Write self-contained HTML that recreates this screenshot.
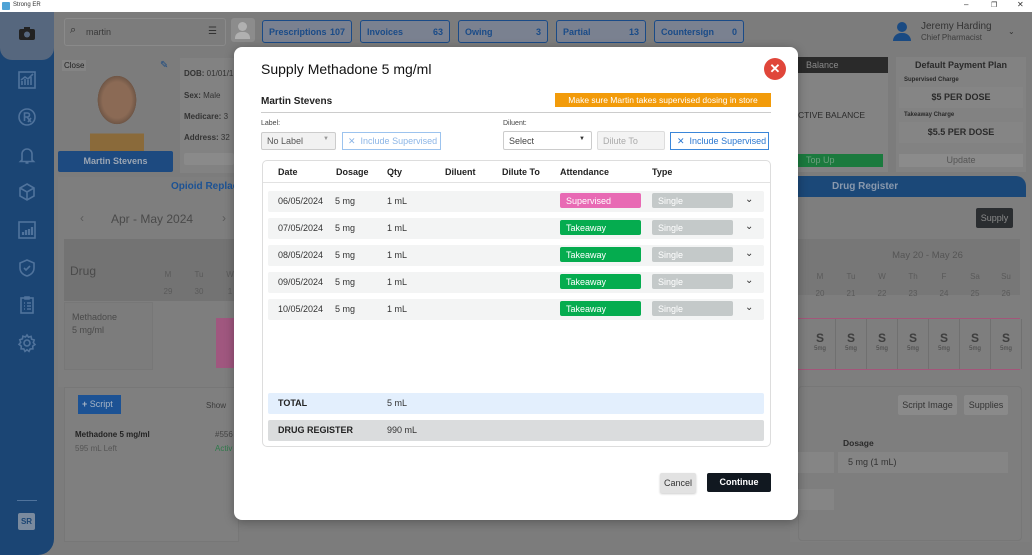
<!DOCTYPE html>
<html><head><meta charset="utf-8"><style>
*{box-sizing:border-box;margin:0;padding:0}
body{width:1032px;height:555px;overflow:hidden;background:#7c7c7c;font-family:"Liberation Sans",sans-serif;position:relative;color:#222}
.a{position:absolute}
.tab{position:absolute;top:20px;height:23px;border:1.5px solid #1a4b88;border-radius:3px;background:#7a8190;color:#1a4b88;font-size:9px;font-weight:bold;display:flex;justify-content:space-between;align-items:center;padding:0 6px}
.ic{position:absolute;left:17px;width:20px;height:20px;fill:none;stroke:#50739c;stroke-width:1.6}
.row{position:absolute;left:268px;width:496px;height:21px;background:#f3f4f4;border-radius:2px;font-size:9px;color:#333}
.row span{position:absolute;top:5px}
.pill{position:absolute;top:2px;height:15px;border-radius:2px;color:#fff;font-size:9px;padding:3px 0 0 6px}
.cal{position:absolute;font-size:8px;color:#5a5a5a;text-align:center}
</style></head><body>
<div class="a" style="left:0;top:0;width:1032px;height:12px;background:#fff;font-size:6px;color:#333">
<div class="a" style="left:2px;top:2px;width:8px;height:8px;background:#4fa3d6;border-radius:1px"></div>
<div class="a" style="left:13px;top:2px">Strong ER</div>
<div class="a" style="left:964px;top:0;font-size:8px">–</div>
<div class="a" style="left:991px;top:1px;font-size:7px">❐</div>
<div class="a" style="left:1017px;top:0;font-size:8px">✕</div>
</div>
<div class="a" style="left:0;top:12px;width:54px;height:543px;background:#1b4574;border-radius:0 0 16px 0"></div>
<div class="a" style="left:0;top:12px;width:54px;height:48px;background:#56677e;border-radius:0 0 12px 12px"></div>
<svg class="a" style="left:19px;top:27px" width="16" height="13"><rect x="0" y="2" width="16" height="11" rx="2" fill="#222"/><rect x="5" y="0" width="6" height="3" fill="#222"/><circle cx="8" cy="7.5" r="3" fill="#56677e"/></svg>
<svg class="ic" style="top:70px" viewBox="0 0 20 20"><rect x="2" y="2" width="16" height="16"/><path d="M5 15v-4M8 15v-6M11 15v-5M14 15v-8M4 10l4-3 3 2 5-5"/></svg>
<svg class="ic" style="top:107px" viewBox="0 0 20 20"><circle cx="10" cy="10" r="8"/><path d="M7.5 14V6h3a2 2 0 0 1 0 4h-3M10 10l4 5M14 11l-3 4"/></svg>
<svg class="ic" style="top:145px" viewBox="0 0 20 20"><path d="M5 15V9a5 5 0 0 1 10 0v6l1.5 1.5h-13zM8.5 18h3"/></svg>
<svg class="ic" style="top:182px" viewBox="0 0 20 20"><path d="M10 2l7 4v8l-7 4-7-4V6zM3 6l7 4 7-4M10 10v8"/></svg>
<svg class="ic" style="top:220px" viewBox="0 0 20 20"><rect x="2" y="2" width="16" height="16"/><path d="M6 15v-3M9 15v-5M12 15v-6M15 15v-8" stroke-width="2.2"/></svg>
<svg class="ic" style="top:258px" viewBox="0 0 20 20"><path d="M10 2l7 3v5c0 4-3 7-7 8-4-1-7-4-7-8V5zM7 10l2 2 4-4"/></svg>
<svg class="ic" style="top:295px" viewBox="0 0 20 20"><rect x="4" y="3" width="12" height="15"/><path d="M8 2h4v2H8zM7 8h1M10 8h4M7 11h1M10 11h4M7 14h1M10 14h4"/></svg>
<svg class="ic" style="top:333px" viewBox="0 0 20 20"><circle cx="10" cy="10" r="3"/><path d="M10 2l1.5 2.2 2.6-.8.5 2.7 2.6.9-.9 2.6 1.7 2-2.3 1.5.2 2.7-2.7.1-1.2 2.5-2-1.6-2 1.6-1.2-2.5-2.7-.1.2-2.7L2 11.4l1.7-2-.9-2.6 2.6-.9.5-2.7 2.6.8z"/></svg>
<div class="a" style="left:17px;top:500px;width:20px;height:1px;background:#50739c"></div>
<div class="a" style="left:18px;top:513px;width:17px;height:17px;background:#7a8a9e;border-radius:2px;color:#1b4574;font-size:8px;font-weight:bold;text-align:center;line-height:17px">SR</div>
<div class="a" style="left:64px;top:18px;width:162px;height:28px;border:1px solid #8a8a8a;border-radius:3px;background:#7c7c7c"></div>
<div class="a" style="left:70px;top:24px;font-size:11px;color:#2e2e2e">⌕</div>
<div class="a" style="left:86px;top:27px;font-size:9px;color:#3a3a3a">martin</div>
<div class="a" style="left:208px;top:26px;font-size:10px;color:#333">☰</div>
<div class="a" style="left:231px;top:18px;width:24px;height:24px;background:#8c8c8c;border-radius:3px"></div>
<div class="a" style="left:238px;top:22px;width:9px;height:9px;border-radius:50%;background:#b0b0b0"></div>
<div class="a" style="left:235px;top:32px;width:15px;height:7px;border-radius:6px 6px 0 0;background:#b0b0b0"></div>
<div class="tab" style="left:262px;width:90px"><span>Prescriptions</span><span>107</span></div>
<div class="tab" style="left:360px;width:90px"><span>Invoices</span><span>63</span></div>
<div class="tab" style="left:458px;width:90px"><span>Owing</span><span>3</span></div>
<div class="tab" style="left:556px;width:90px"><span>Partial</span><span>13</span></div>
<div class="tab" style="left:654px;width:90px"><span>Countersign</span><span>0</span></div>
<div class="a" style="left:897px;top:22px;width:10px;height:10px;border-radius:50%;background:#1a4a82"></div>
<div class="a" style="left:893px;top:33px;width:18px;height:8px;border-radius:8px 8px 0 0;background:#1a4a82"></div>
<div class="a" style="left:921px;top:21px;font-size:10px;color:#333">Jeremy Harding</div>
<div class="a" style="left:921px;top:33px;font-size:8px;color:#3c3c3c">Chief Pharmacist</div>
<div class="a" style="left:1008px;top:27px;font-size:8px;color:#333">⌄</div>
<div class="a" style="left:58px;top:58px;width:118px;height:115px;background:#7c7c7c"></div>
<div class="a" style="left:62px;top:60px;font-size:8px;color:#222;background:#848484;padding:1px 2px">Close</div>
<div class="a" style="left:90px;top:60px;width:54px;height:92px;background:radial-gradient(ellipse 24px 30px at 27px 40px,#8b6a55 60%,#6f5646 80%,transparent 81%),linear-gradient(#7c7c7c 80%,#8a6a3a 80%)"></div>
<div class="a" style="left:160px;top:60px;font-size:10px;color:#1a4a82">✎</div>
<div class="a" style="left:58px;top:151px;width:115px;height:21px;background:#1d4a80;border-radius:2px;color:#9aa5b3;font-size:9px;font-weight:bold;text-align:center;line-height:21px">Martin Stevens</div>
<div class="a" style="left:180px;top:58px;width:56px;height:115px;background:#828282"></div>
<div class="a" style="left:184px;top:69px;font-size:8px;color:#333"><b>DOB:</b> 01/01/1</div>
<div class="a" style="left:184px;top:91px;font-size:8px;color:#333"><b>Sex:</b> Male</div>
<div class="a" style="left:184px;top:112px;font-size:8px;color:#333"><b>Medicare:</b> 3</div>
<div class="a" style="left:184px;top:133px;font-size:8px;color:#333"><b>Address:</b> 32</div>
<div class="a" style="left:184px;top:153px;width:50px;height:12px;background:#8a8a8a;border-radius:2px"></div>
<div class="a" style="left:58px;top:177px;width:180px;height:210px;background:#7e7e7e"></div>
<div class="a" style="left:171px;top:181px;font-size:10px;font-weight:bold;color:#1c5294">Opioid Replac</div>
<div class="a" style="left:80px;top:211px;font-size:12px;color:#5a5a5a">‹</div>
<div class="a" style="left:111px;top:212px;font-size:12px;color:#4a4a4a">Apr - May 2024</div>
<div class="a" style="left:222px;top:211px;font-size:12px;color:#5a5a5a">›</div>
<div class="a" style="left:64px;top:239px;width:170px;height:62px;background:#737373"></div>
<div class="a" style="left:70px;top:264px;font-size:12px;color:#4a4a4a">Drug</div>
<div class="a" style="left:64px;top:302px;width:89px;height:68px;background:#7c7c7c;border:1px solid #777"></div>
<div class="a" style="left:72px;top:311px;font-size:9px;color:#4a4a4a;line-height:13px">Methadone<br>5 mg/ml</div>
<div class="cal" style="left:153px;top:270px;width:30px">M</div><div class="cal" style="left:184px;top:270px;width:30px">Tu</div><div class="cal" style="left:215px;top:270px;width:30px">W</div>
<div class="cal" style="left:153px;top:287px;width:30px">29</div><div class="cal" style="left:184px;top:287px;width:30px">30</div><div class="cal" style="left:215px;top:287px;width:30px">1</div>
<div class="a" style="left:216px;top:318px;width:20px;height:50px;background:#a0577f"></div>
<div class="a" style="left:64px;top:387px;width:175px;height:155px;background:#7f7f7f;border:1px solid #777"></div>
<div class="a" style="left:78px;top:395px;width:43px;height:19px;background:#1c5294;color:#a8b5c5;font-size:9px;padding:4px 0 0 4px"><b>+</b> Script</div>
<div class="a" style="left:206px;top:401px;font-size:8px;color:#3a3a3a">Show</div>
<div class="a" style="left:75px;top:430px;font-size:8px;font-weight:bold;color:#222">Methadone 5 mg/ml</div>
<div class="a" style="left:75px;top:444px;font-size:8px;color:#555">595 mL Left</div>
<div class="a" style="left:215px;top:430px;font-size:8px;color:#444">#556</div>
<div class="a" style="left:215px;top:444px;font-size:8px;color:#2e7a4a">Activ</div>
<div class="a" style="left:798px;top:57px;width:90px;height:115px;background:#838383"></div>
<div class="a" style="left:798px;top:57px;width:90px;height:16px;background:#2a2a2a;color:#8a8a8a;font-size:9px;padding:3px 0 0 8px">Balance</div>
<div class="a" style="left:798px;top:110px;font-size:8.5px;color:#2a2a2a">CTIVE BALANCE</div>
<div class="a" style="left:798px;top:154px;width:85px;height:13px;background:#1b7a3e;color:#6f9f7f;font-size:9px;padding:1px 0 0 8px">Top Up</div>
<div class="a" style="left:896px;top:57px;width:130px;height:115px;background:#828282"></div>
<div class="a" style="left:896px;top:60px;width:130px;text-align:center;font-size:9px;font-weight:bold;color:#2a2a2a">Default Payment Plan</div>
<div class="a" style="left:904px;top:77px;font-size:6px;font-weight:bold;color:#2a2a2a">Supervised Charge</div>
<div class="a" style="left:899px;top:87px;width:124px;height:21px;background:#858585;text-align:center;font-size:9px;font-weight:bold;color:#2a2a2a;line-height:21px">$5 PER DOSE</div>
<div class="a" style="left:904px;top:112px;font-size:6px;font-weight:bold;color:#2a2a2a">Takeaway Charge</div>
<div class="a" style="left:899px;top:122px;width:124px;height:21px;background:#858585;text-align:center;font-size:9px;font-weight:bold;color:#2a2a2a;line-height:21px">$5.5 PER DOSE</div>
<div class="a" style="left:899px;top:154px;width:124px;height:13px;background:#8b8b8b;text-align:center;font-size:9px;color:#555;line-height:13px">Update</div>
<div class="a" style="left:790px;top:176px;width:236px;height:21px;background:#1b4878;border-radius:0 10px 0 0;color:#8a99ad;font-size:10px;font-weight:bold;padding:5px 0 0 42px">Drug Register</div>
<div class="a" style="left:790px;top:197px;width:240px;height:345px;background:#7e7e7e"></div>
<div class="a" style="left:976px;top:208px;width:37px;height:20px;background:#2a2d30;color:#8a8a8a;font-size:9px;text-align:center;line-height:20px;border-radius:2px">Supply</div>
<div class="a" style="left:798px;top:239px;width:222px;height:56px;background:#777"></div>
<div class="a" style="left:800px;top:250px;width:225px;text-align:center;font-size:9.5px;color:#555;padding-left:30px">May 20 - May 26</div>
<div class="a" style="left:798px;top:318px;width:222px;height:1px;background:#a3567a"></div>
<div class="a" style="left:798px;top:369px;width:222px;height:1px;background:#a3567a"></div>
<div id="rc"></div>
<div class="a" style="left:798px;top:386px;width:224px;height:155px;border:1px solid #777;border-radius:4px"></div>
<div class="a" style="left:898px;top:395px;width:59px;height:20px;background:#8a8a8a;font-size:9px;color:#333;text-align:center;line-height:20px;border-radius:2px">Script Image</div>
<div class="a" style="left:964px;top:395px;width:44px;height:20px;background:#8a8a8a;font-size:9px;color:#333;text-align:center;line-height:20px;border-radius:2px">Supplies</div>
<div class="a" style="left:843px;top:438px;font-size:8.5px;font-weight:bold;color:#2a2a2a">Dosage</div>
<div class="a" style="left:838px;top:452px;width:170px;height:21px;background:#858585;font-size:9px;color:#333;padding:5px 0 0 10px">5 mg (1 mL)</div>
<div class="a" style="left:798px;top:452px;width:36px;height:21px;background:#858585"></div>
<div class="a" style="left:798px;top:489px;width:36px;height:21px;background:#858585"></div>
<script>
var h='';var d=['M','Tu','W','Th','F','Sa','Su'];
for(var i=0;i<7;i++){var x=805+i*31;
h+='<div class="cal" style="left:'+x+'px;top:272px;width:30px">'+d[i]+'</div><div class="cal" style="left:'+x+'px;top:289px;width:30px">'+(20+i)+'</div>';
h+='<div class="cal" style="left:'+x+'px;top:331px;width:30px;font-size:12px;font-weight:bold;color:#3e3e3e">S</div><div class="cal" style="left:'+x+'px;top:346px;width:30px;font-size:6px;color:#444">5mg</div>';
h+='<div class="a" style="left:'+(x+30)+'px;top:319px;width:1px;height:50px;background:#707070"></div>';}
document.getElementById('rc').outerHTML=h;
</script>
<div class="a" style="left:234px;top:47px;width:564px;height:473px;background:#fff;border-radius:8px;box-shadow:0 2px 10px rgba(0,0,0,.3)"></div>
<div class="a" style="left:261px;top:61px;font-size:14px;color:#111">Supply Methadone 5 mg/ml</div>
<div class="a" style="left:764px;top:58px;width:22px;height:22px;border-radius:50%;background:#e0463a;color:#fff;font-size:13px;font-weight:bold;text-align:center;line-height:22px">✕</div>
<div class="a" style="left:261px;top:96px;font-size:10px;font-weight:bold;color:#222">Martin Stevens</div>
<div class="a" style="left:555px;top:93px;width:216px;height:14px;background:#f29b0a;color:#fff;font-size:8.5px;text-align:center;line-height:14px">Make sure Martin takes supervised dosing in store</div>
<div class="a" style="left:261px;top:112px;width:510px;height:1px;background:#ccc"></div>
<div class="a" style="left:261px;top:120px;font-size:7px;color:#444">Label:</div>
<div class="a" style="left:261px;top:132px;width:75px;height:18px;background:#f1f1f1;border:1px solid #ccc;border-radius:2px;font-size:9px;color:#555;padding:3px 0 0 5px">No Label<span style="position:absolute;right:6px;top:3px;font-size:6px;color:#999">▼</span></div>
<div class="a" style="left:342px;top:132px;width:99px;height:18px;border:1px solid #9cc3ee;font-size:9px;color:#8bb5e6;padding:3px 0 0 5px">✕&nbsp; Include Supervised</div>
<div class="a" style="left:503px;top:120px;font-size:7px;color:#444">Diluent:</div>
<div class="a" style="left:503px;top:131px;width:89px;height:19px;border:1px solid #ccc;border-radius:2px;font-size:9px;color:#444;padding:4px 0 0 5px">Select<span style="position:absolute;right:6px;top:4px;font-size:6px;color:#333">▼</span></div>
<div class="a" style="left:597px;top:131px;width:68px;height:19px;background:#f3f3f3;border:1px solid #ddd;border-radius:2px;font-size:9px;color:#aaa;padding:4px 0 0 5px">Dilute To</div>
<div class="a" style="left:670px;top:132px;width:99px;height:18px;border:1px solid #3a86d9;font-size:9px;color:#2a77d0;padding:3px 0 0 6px">✕&nbsp; Include Supervised</div>
<div class="a" style="left:262px;top:160px;width:509px;height:287px;border:1px solid #ddd;border-radius:5px"></div>
<div class="a" style="left:263px;top:182px;width:507px;height:1px;background:#e2e2e2"></div>
<div class="a" style="left:278px;top:167px;font-size:9px;font-weight:bold;color:#222">Date</div>
<div class="a" style="left:336px;top:167px;font-size:9px;font-weight:bold;color:#222">Dosage</div>
<div class="a" style="left:387px;top:167px;font-size:9px;font-weight:bold;color:#222">Qty</div>
<div class="a" style="left:445px;top:167px;font-size:9px;font-weight:bold;color:#222">Diluent</div>
<div class="a" style="left:502px;top:167px;font-size:9px;font-weight:bold;color:#222">Dilute To</div>
<div class="a" style="left:560px;top:167px;font-size:9px;font-weight:bold;color:#222">Attendance</div>
<div class="a" style="left:652px;top:167px;font-size:9px;font-weight:bold;color:#222">Type</div>
<div class="row" style="top:191px"><span style="left:10px">06/05/2024</span><span style="left:67px">5 mg</span><span style="left:119px">1 mL</span><div class="pill" style="left:292px;width:81px;background:#e86ab4">Supervised</div><div class="pill" style="left:384px;width:81px;background:#c4c9c9">Single</div><span style="left:477px;top:3px;font-size:10px">⌄</span></div>
<div class="row" style="top:218px"><span style="left:10px">07/05/2024</span><span style="left:67px">5 mg</span><span style="left:119px">1 mL</span><div class="pill" style="left:292px;width:81px;background:#05ac4f">Takeaway</div><div class="pill" style="left:384px;width:81px;background:#c4c9c9">Single</div><span style="left:477px;top:3px;font-size:10px">⌄</span></div>
<div class="row" style="top:245px"><span style="left:10px">08/05/2024</span><span style="left:67px">5 mg</span><span style="left:119px">1 mL</span><div class="pill" style="left:292px;width:81px;background:#05ac4f">Takeaway</div><div class="pill" style="left:384px;width:81px;background:#c4c9c9">Single</div><span style="left:477px;top:3px;font-size:10px">⌄</span></div>
<div class="row" style="top:272px"><span style="left:10px">09/05/2024</span><span style="left:67px">5 mg</span><span style="left:119px">1 mL</span><div class="pill" style="left:292px;width:81px;background:#05ac4f">Takeaway</div><div class="pill" style="left:384px;width:81px;background:#c4c9c9">Single</div><span style="left:477px;top:3px;font-size:10px">⌄</span></div>
<div class="row" style="top:299px"><span style="left:10px">10/05/2024</span><span style="left:67px">5 mg</span><span style="left:119px">1 mL</span><div class="pill" style="left:292px;width:81px;background:#05ac4f">Takeaway</div><div class="pill" style="left:384px;width:81px;background:#c4c9c9">Single</div><span style="left:477px;top:3px;font-size:10px">⌄</span></div>
<div class="row" style="top:393px;background:#e3effd"><span style="left:10px;font-weight:bold;color:#222">TOTAL</span><span style="left:119px">5 mL</span></div>
<div class="row" style="top:420px;background:#dadcdd"><span style="left:10px;font-weight:bold;color:#222">DRUG REGISTER</span><span style="left:119px">990 mL</span></div>
<div class="a" style="left:660px;top:473px;width:36px;height:20px;background:#e2e2e2;border-radius:2px;font-size:9px;color:#333;text-align:center;line-height:20px;box-shadow:0 1px 2px rgba(0,0,0,.2)">Cancel</div>
<div class="a" style="left:707px;top:473px;width:64px;height:19px;background:#111820;border-radius:2px;font-size:9px;font-weight:bold;color:#fff;text-align:center;line-height:19px">Continue</div>
</body></html>
